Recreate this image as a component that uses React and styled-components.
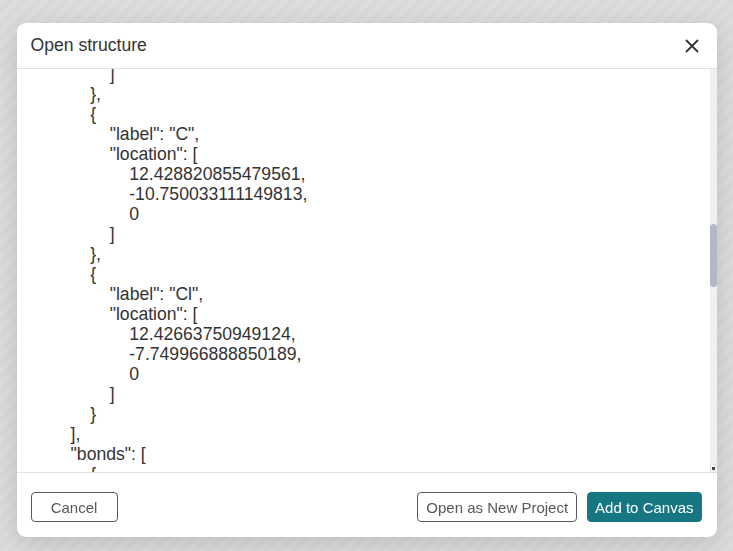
import React, { useEffect, useRef, useState } from "react";
import styled, { createGlobalStyle } from "styled-components";

const atoms = [
  { label: "C", location: [11.129868021399563, -9.99996688885019, 0] },
  { label: "C", location: [11.127661843855034, -8.499966888850189, 0] },
  { label: "C", location: [9.829103021399562, -10.750033111149813, 0] },
  { label: "C", location: [13.726615030941023, -9.998066888850188, 0] },
  { label: "C", location: [13.728820855479561, -8.49800688885019, 0] },
  { label: "C", location: [12.428820855479561, -10.750033111149813, 0] },
  { label: "Cl", location: [12.42663750949124, -7.749966888850189, 0] },
];

const bonds = [
  [0, 1],
  [0, 2],
  [0, 5],
  [5, 3],
  [3, 4],
  [4, 1],
  [1, 6],
  [2, 5],
].map((pair, i) => ({ type: i % 2 ? 2 : 1, atoms: pair }));

const structure = {
  root: { nodes: [{ $ref: "mol0" }] },
  mol0: { type: "molecule", atoms, bonds },
};

const text = JSON.stringify(structure, null, 4);

const GlobalStyle = createGlobalStyle`
  html, body {
    margin: 0;
    height: 100%;
  }
  body {
    font-family: "Liberation Sans", Arial, sans-serif;
    background-color: #d9d9d9;
    background-image: repeating-linear-gradient(
      135deg,
      rgba(255, 255, 255, 0.1) 0px,
      rgba(255, 255, 255, 0.1) 5px,
      rgba(0, 0, 0, 0) 5px,
      rgba(0, 0, 0, 0) 10px
    );
  }
  #root {
    height: 100%;
  }
`;

const Backdrop = styled.div`
  height: 100%;
  display: flex;
  justify-content: center;
  padding-top: 23px;
  box-sizing: border-box;
`;

const Dialog = styled.div`
  width: 700px;
  height: 514px;
  background: #fff;
  border-radius: 9px;
  overflow: hidden;
  display: flex;
  flex-direction: column;
  box-shadow: 0 6px 24px rgba(0, 0, 0, 0.14);
`;

const Header = styled.div`
  height: 45px;
  flex-shrink: 0;
  display: flex;
  align-items: center;
  justify-content: space-between;
  padding: 0 13px 0 15px;
  border-bottom: 1px solid #e1e1e1;
`;

const Title = styled.h2`
  margin: 0 0 0 -1px;
  font-size: 17.6px;
  font-weight: 400;
  color: #333;
`;

const CloseButton = styled.button`
  border: none;
  background: none;
  padding: 0;
  width: 24px;
  height: 24px;
  display: flex;
  align-items: center;
  justify-content: center;
  color: #333;
  cursor: pointer;
`;

const EditorArea = styled.div`
  flex: 1;
  min-height: 0;
  display: flex;
`;

const Editor = styled.textarea`
  flex: 1;
  min-width: 0;
  margin: 0;
  border: none;
  outline: none;
  resize: none;
  padding: 0 15px;
  font-family: "Liberation Sans", Arial, sans-serif;
  font-size: 17.6px;
  line-height: 20px;
  color: #333;
  white-space: pre;
  overflow-y: auto;
  overflow-x: hidden;
  scrollbar-width: none;
`;

const ScrollTrack = styled.div`
  width: 7px;
  flex-shrink: 0;
  background: #eef0f3;
  display: flex;
  flex-direction: column;
`;

const ScrollThumb = styled.div`
  width: 7px;
  background: #b2b9c4;
  border-radius: 4px;
`;

const Corner = styled.div`
  margin-top: auto;
  height: 7px;
  background: #f4f4f4;
  border-top: 1px solid #e4e4e4;
  border-left: 1px solid #e4e4e4;
  display: flex;
  align-items: center;
  justify-content: center;

  &::after {
    content: "";
    width: 3px;
    height: 3px;
    background: #444;
  }
`;

const Footer = styled.div`
  height: 65px;
  flex-shrink: 0;
  box-sizing: border-box;
  border-top: 1px solid #e1e1e1;
  display: flex;
  align-items: center;
  padding: 4px 15px 0 14px;
  gap: 10px;
`;

const Spacer = styled.div`
  flex: 1;
`;

const Button = styled.button`
  height: 30px;
  padding: 0 ${(p) => (p.$primary ? "7px" : "8px")};
  width: ${(p) => (p.$width ? p.$width : "auto")};
  border-radius: 4px;
  font-family: "Liberation Sans", Arial, sans-serif;
  font-size: 15px;
  cursor: pointer;
  border: 1px solid ${(p) => (p.$primary ? "#167782" : "#585858")};
  background: ${(p) => (p.$primary ? "#167782" : "#fff")};
  color: ${(p) => (p.$primary ? "#fff" : "#585858")};
`;

const App = () => {
  const editorRef = useRef(null);
  const [thumb, setThumb] = useState({ top: 154, height: 63 });

  useEffect(() => {
    const el = editorRef.current;
    if (!el) return;
    el.scrollTop = 985;
    const track = el.clientHeight;
    const ratio = track / el.scrollHeight;
    setThumb({
      top: Math.round(el.scrollTop * ratio),
      height: Math.round(track * ratio),
    });
  }, []);

  return (
    <>
      <GlobalStyle />
      <Backdrop>
        <Dialog>
          <Header>
            <Title>Open structure</Title>
            <CloseButton aria-label="Close">
              <svg width="14" height="14" viewBox="0 0 14 14">
                <path
                  d="M1.5 1.5 L12.5 12.5 M12.5 1.5 L1.5 12.5"
                  stroke="currentColor"
                  strokeWidth="1.8"
                  strokeLinecap="round"
                />
              </svg>
            </CloseButton>
          </Header>
          <EditorArea>
            <Editor
              ref={editorRef}
              defaultValue={text}
              spellCheck={false}
            />
            <ScrollTrack>
              <ScrollThumb
                style={{ marginTop: thumb.top, height: thumb.height }}
              />
              <Corner />
            </ScrollTrack>
          </EditorArea>
          <Footer>
            <Button $width="87px">Cancel</Button>
            <Spacer />
            <Button>Open as New Project</Button>
            <Button $primary>Add to Canvas</Button>
          </Footer>
        </Dialog>
      </Backdrop>
    </>
  );
};

export default App;
